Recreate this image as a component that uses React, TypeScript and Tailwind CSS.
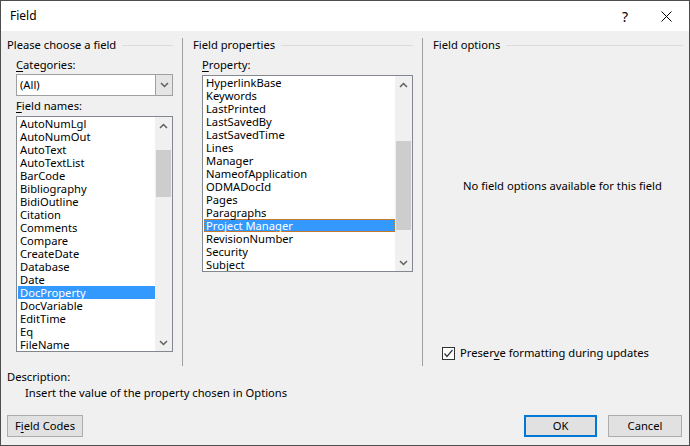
import { ReactNode } from 'react';

const FIELD_NAMES = [
  'AutoNumLgl',
  'AutoNumOut',
  'AutoText',
  'AutoTextList',
  'BarCode',
  'Bibliography',
  'BidiOutline',
  'Citation',
  'Comments',
  'Compare',
  'CreateDate',
  'Database',
  'Date',
  'DocProperty',
  'DocVariable',
  'EditTime',
  'Eq',
  'FileName',
];

const PROPERTIES = [
  'HyperlinkBase',
  'Keywords',
  'LastPrinted',
  'LastSavedBy',
  'LastSavedTime',
  'Lines',
  'Manager',
  'NameofApplication',
  'ODMADocId',
  'Pages',
  'Paragraphs',
  'Project Manager',
  'RevisionNumber',
  'Security',
  'Subject',
];

function Chevron({ up }: { up?: boolean }) {
  return (
    <svg width="9" height="6" viewBox="0 0 9 6" className="block">
      <polyline
        points={up ? '1,5 4.5,1.5 8,5' : '1,1 4.5,4.5 8,1'}
        fill="none"
        stroke="#606060"
        strokeWidth="1.5"
      />
    </svg>
  );
}

function GroupTitle({ children }: { children: ReactNode }) {
  return (
    <div className="flex h-[16px] items-center gap-[6px] leading-[16px]">
      <span>{children}</span>
      <div className="h-px flex-1 bg-[#dcdcdc]" />
    </div>
  );
}

function ListBox({
  items,
  selected,
  focus,
  thumb,
  className,
}: {
  items: string[];
  selected: string;
  focus?: boolean;
  thumb: string;
  className: string;
}) {
  return (
    <div className={`flex border border-[#828790] bg-white ${className}`}>
      <ul className="flex-1 overflow-hidden">
        {items.map((item) =>
          item === selected ? (
            <li
              key={item}
              className={`ml-px h-[13px] bg-[#3399ff] text-white ${
                focus ? 'border border-dotted border-[#c8782e] pl-[1px] leading-[11px]' : 'pl-[2px] leading-[13px]'
              }`}
            >
              {item}
            </li>
          ) : (
            <li key={item} className="h-[13px] pl-[3px] leading-[13px]">
              {item}
            </li>
          ),
        )}
      </ul>
      <div className="flex w-[17px] flex-col bg-[#f0f0f0]">
        <div className="flex h-[17px] items-center justify-center">
          <Chevron up />
        </div>
        <div className="flex-1">
          <div className={`mx-px bg-[#cdcdcd] ${thumb}`} />
        </div>
        <div className="flex h-[17px] items-center justify-center">
          <Chevron />
        </div>
      </div>
    </div>
  );
}

function Button({ children, primary, className }: { children: ReactNode; primary?: boolean; className: string }) {
  return (
    <button
      className={`flex h-[22px] items-center justify-center bg-[#e1e1e1] ${
        primary ? 'border-2 border-[#0078d7]' : 'border border-[#adadad]'
      } ${className}`}
    >
      {children}
    </button>
  );
}

export default function App() {
  return (
    <div
      className="flex h-[446px] w-[690px] flex-col border border-[#4d4d4d] text-[11.2px] text-black"
      style={{ fontFamily: '"Segoe UI", "Noto Sans", sans-serif' }}
    >
      {/* title bar */}
      <div className="flex h-[30px] items-center bg-white">
        <span className="pl-[9px] text-[12px]">Field</span>
        <span className="ml-auto mr-[33px] text-[14px]">?</span>
        <svg width="11" height="11" viewBox="0 0 11 11" className="mr-[17px]">
          <path d="M0.5 0.5 L10.5 10.5 M10.5 0.5 L0.5 10.5" stroke="#000" strokeWidth="1" />
        </svg>
      </div>

      <div className="flex flex-1 flex-col bg-[#f0f0f0]">
        <div className="mt-[6px] flex h-[329px]">
          {/* left column */}
          <div className="w-[181px] pl-[6px] pr-[9px]">
            <GroupTitle>Please choose a field</GroupTitle>
            <div className="mt-[4px] pl-[9px] leading-[16px]">
              <u className="underline-offset-2">C</u>ategories:
            </div>
            <div className="ml-[9px] mt-px flex h-[22px] border border-[#a0a0a0] bg-white">
              <span className="flex-1 pl-[3px] leading-[20px]">(All)</span>
              <div className="flex w-[17px] items-center justify-center border-l border-[#a0a0a0] bg-[#e5e5e5]">
                <Chevron />
              </div>
            </div>
            <div className="mt-[2px] pl-[9px] leading-[16px]">
              <u className="underline-offset-2">F</u>ield names:
            </div>
            <ListBox
              items={FIELD_NAMES}
              selected="DocProperty"
              thumb="mt-[16px] h-[47px]"
              className="ml-[9px] mt-[2px] h-[236px]"
            />
          </div>

          <div className="mt-px h-[328px] w-px bg-[#a0a0a0]" />

          {/* middle column */}
          <div className="w-[239px] pl-[10px] pr-[9px]">
            <GroupTitle>Field properties</GroupTitle>
            <div className="mt-[4px] pl-[9px] leading-[16px]">
              <u className="underline-offset-2">P</u>roperty:
            </div>
            <ListBox
              items={PROPERTIES}
              selected="Project Manager"
              focus
              thumb="mt-[48px] h-[89px]"
              className="ml-[9px] mt-[2px] h-[197px]"
            />
          </div>

          <div className="mt-px h-[328px] w-px bg-[#a0a0a0]" />

          {/* right column */}
          <div className="flex flex-1 flex-col pl-[10px] pr-[6px]">
            <GroupTitle>Field options</GroupTitle>
            <div className="mt-[125px] pl-[30px] leading-[16px]">No field options available for this field</div>
            <div className="mt-[151px] flex items-center pl-[9px] leading-[16px]">
              <div className="flex h-[13px] w-[13px] items-center justify-center border border-[#333] bg-white">
                <svg width="11" height="11" viewBox="0 0 11 11">
                  <polyline points="1.5,5.5 4,8.5 9.5,2" fill="none" stroke="#333" strokeWidth="1.2" />
                </svg>
              </div>
              <span className="pl-[5px]">
                Preser<u className="underline-offset-2">v</u>e formatting during updates
              </span>
            </div>
          </div>
        </div>

        <div className="mt-[3px] pl-[6px] leading-[16px]">Description:</div>
        <div className="pl-[24px] leading-[16px]">Insert the value of the property chosen in Options</div>

        <div className="mt-[14px] flex pl-[6px] pr-[7px]">
          <Button className="w-[76px]">
            F<u className="underline-offset-2">i</u>eld Codes
          </Button>
          <Button primary className="ml-auto w-[73px]">
            OK
          </Button>
          <Button className="ml-[11px] w-[74px]">Cancel</Button>
        </div>
      </div>
    </div>
  );
}
